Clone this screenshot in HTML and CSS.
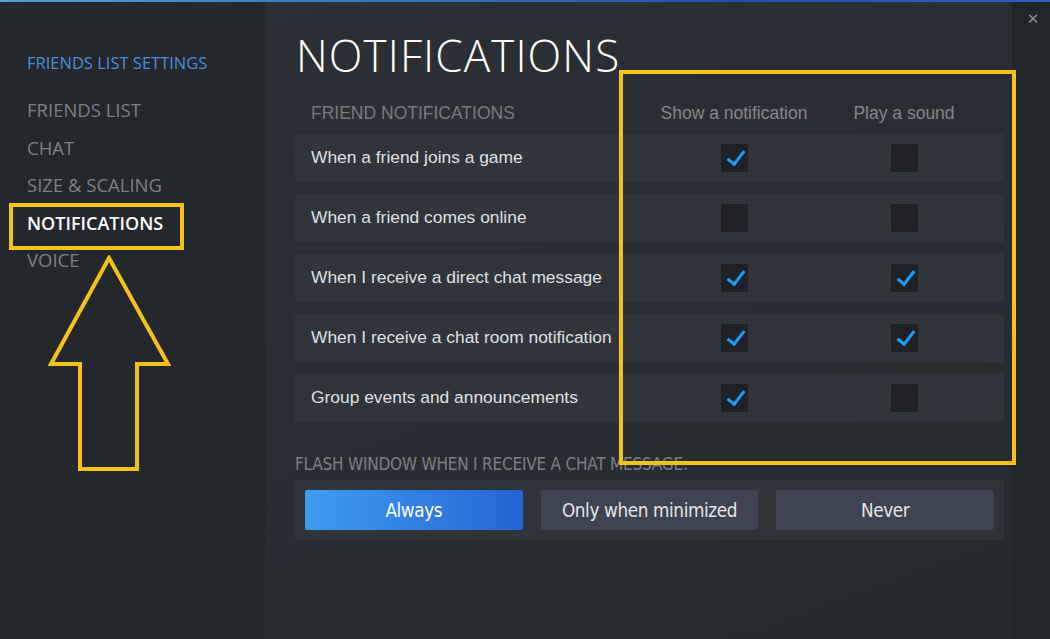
FILE: index.html
```html
<!DOCTYPE html>
<html lang="en">
<head>
  <meta charset="UTF-8">
  <title>Friends List Settings - Notifications</title>
  <link rel="stylesheet" href="styles.css">
</head>
<body>
  <div class="topline"></div>
  <div class="window">
    <nav class="sidebar">
      <div class="sidebar-title">FRIENDS LIST SETTINGS</div>
      <ul class="nav">
        <li>FRIENDS LIST</li>
        <li>CHAT</li>
        <li>SIZE &amp; SCALING</li>
        <li class="active">NOTIFICATIONS</li>
        <li>VOICE</li>
      </ul>
    </nav>

    <main class="content">
      <h1>NOTIFICATIONS</h1>

      <div class="grid">
        <div class="grid-head">
          <span class="label head-label">FRIEND NOTIFICATIONS</span>
          <span class="col">Show a notification</span>
          <span class="col">Play a sound</span>
        </div>

        <div class="row">
          <span class="label">When a friend joins a game</span>
          <span class="col"><span class="check on"></span></span>
          <span class="col"><span class="check"></span></span>
        </div>
        <div class="row">
          <span class="label">When a friend comes online</span>
          <span class="col"><span class="check"></span></span>
          <span class="col"><span class="check"></span></span>
        </div>
        <div class="row">
          <span class="label">When I receive a direct chat message</span>
          <span class="col"><span class="check on"></span></span>
          <span class="col"><span class="check on"></span></span>
        </div>
        <div class="row">
          <span class="label">When I receive a chat room notification</span>
          <span class="col"><span class="check on"></span></span>
          <span class="col"><span class="check on"></span></span>
        </div>
        <div class="row">
          <span class="label">Group events and announcements</span>
          <span class="col"><span class="check on"></span></span>
          <span class="col"><span class="check"></span></span>
        </div>
      </div>

      <div class="flash-label">FLASH WINDOW WHEN I RECEIVE A CHAT MESSAGE:</div>
      <div class="flash-options">
        <button class="opt selected">Always</button>
        <button class="opt">Only when minimized</button>
        <button class="opt">Never</button>
      </div>
    </main>

    <div class="edge">
      <span class="close">&#x2715;</span>
    </div>
  </div>

  <!-- annotation overlay -->
  <div class="mark mark-nav"></div>
  <div class="mark mark-cols"></div>
  <svg class="arrow" width="130" height="220" viewBox="0 0 130 220">
    <path d="M61 3 L120 109 L89 109 L89 214 L32 214 L32 109 L3 109 Z" fill="none" stroke="#f6c217" stroke-width="4" stroke-linejoin="miter"/>
  </svg>
</body>
</html>
```

FILE: styles.css
```css
* {
  box-sizing: border-box;
}
body {
  margin: 0;
  width: 1050px;
  height: 639px;
  overflow: hidden;
  background: #23262b;
  font-family: Arial, "Liberation Sans", sans-serif;
  position: relative;
}
.topline {
  height: 2px;
  background: linear-gradient(90deg, #4aa3d8 0%, #2a73c0 40%, #1d55b0 70%, #2b5fc4 100%);
}
.window {
  display: flex;
  height: 637px;
}
.sidebar {
  width: 265px;
  background: #24272c;
  padding: 50px 0 0 27px;
  font-family: "Open Sans", sans-serif;
}
.sidebar-title {
  color: #4b8fdc;
  font-size: 16.5px;
  line-height: 22px;
  margin-bottom: 24px;
}
.nav {
  list-style: none;
  margin: 0;
  padding: 0;
}
.nav li {
  color: #7d8086;
  font-size: 18.5px;
  height: 37.5px;
  line-height: 24px;
}
.nav li.active {
  color: #ffffff;
  font-weight: 600;
  font-size: 18px;
}
.content {
  width: 747px;
  padding: 28px 8px 0 30px;
  background: linear-gradient(160deg, #2c2f35 0%, #292c32 60%, #26292e 100%);
}
h1 {
  margin: 0 0 0 1px;
  font-family: "Open Sans", sans-serif;
  font-weight: 300;
  font-size: 44px;
  letter-spacing: 1.1px;
  line-height: 50px;
  color: #ffffff;
}
.grid {
  margin-top: 18px;
  width: 709px;
}
.grid-head,
.row {
  display: grid;
  grid-template-columns: 1fr 140px 200px;
  align-items: center;
}
.grid-head {
  height: 26px;
  padding-top: 4px;
  margin-bottom: 10px;
  color: #83868c;
  font-size: 17.5px;
  white-space: nowrap;
}
.head-label {
  color: #777a80;
}
.row {
  height: 48px;
  margin-bottom: 12px;
  background: #30343b;
  color: #dde1e5;
  font-size: 17.4px;
  line-height: 20px;
}
.row .label {
  padding-bottom: 2px;
}
.label {
  padding-left: 16px;
}
.col {
  display: flex;
  justify-content: center;
}
.check {
  width: 27px;
  height: 28px;
  border-radius: 2px;
  background: #1f2126;
  position: relative;
}
.check.on::after {
  content: "";
  position: absolute;
  left: 10px;
  top: 3px;
  width: 7px;
  height: 15px;
  border-right: 3px solid #1a9fff;
  border-bottom: 3px solid #1a9fff;
  transform: rotate(38deg);
}
.flash-label {
  margin-top: 32px;
  color: #7c7f85;
  font-family: "DejaVu Sans Condensed", "DejaVu Sans", sans-serif;
  font-size: 17px;
  letter-spacing: -0.2px;
  line-height: 20px;
}
.flash-options {
  margin-top: 6px;
  width: 709px;
  height: 60px;
  padding: 10px;
  background: #2f333a;
  display: flex;
  gap: 18px;
}
.opt {
  flex: 1;
  border: none;
  border-radius: 2px;
  background: #3d4350;
  color: #e2e5e9;
  font-family: "DejaVu Sans Condensed", "DejaVu Sans", sans-serif;
  font-size: 18.8px;
  letter-spacing: -0.4px;
}
.opt.selected {
  background: linear-gradient(90deg, #3d9df1 0%, #2563d4 100%);
  color: #ffffff;
}
.edge {
  flex: 1;
  background: #22252a;
  display: flex;
  justify-content: center;
  padding-top: 8px;
  padding-left: 4px;
}
.close {
  color: #8c8f95;
  font-size: 15px;
  font-family: "DejaVu Sans", sans-serif;
}
.mark {
  position: absolute;
  border: 4px solid #f6c217;
}
.mark-nav {
  left: 9px;
  top: 203px;
  width: 175px;
  height: 47px;
}
.mark-cols {
  left: 619px;
  top: 70px;
  width: 397px;
  height: 395px;
}
.arrow {
  position: absolute;
  left: 48px;
  top: 255px;
}
```
